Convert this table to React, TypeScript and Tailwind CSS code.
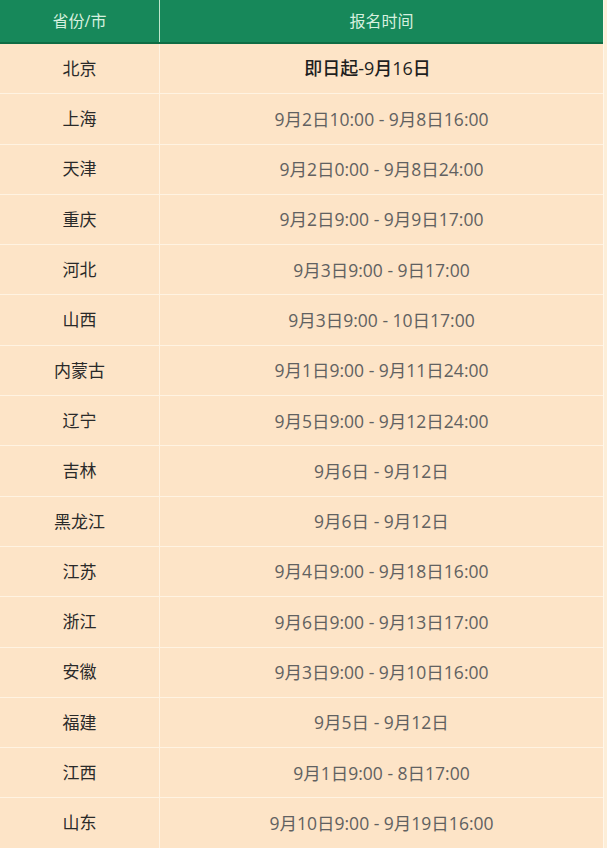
import React from "react";

const rows: [string, string, boolean?][] = [
  ["北京", "即日起-9月16日", true],
  ["上海", "9月2日10:00 - 9月8日16:00"],
  ["天津", "9月2日0:00 - 9月8日24:00"],
  ["重庆", "9月2日9:00 - 9月9日17:00"],
  ["河北", "9月3日9:00 - 9日17:00"],
  ["山西", "9月3日9:00 - 10日17:00"],
  ["内蒙古", "9月1日9:00 - 9月11日24:00"],
  ["辽宁", "9月5日9:00 - 9月12日24:00"],
  ["吉林", "9月6日 - 9月12日"],
  ["黑龙江", "9月6日 - 9月12日"],
  ["江苏", "9月4日9:00 - 9月18日16:00"],
  ["浙江", "9月6日9:00 - 9月13日17:00"],
  ["安徽", "9月3日9:00 - 9月10日16:00"],
  ["福建", "9月5日 - 9月12日"],
  ["江西", "9月1日9:00 - 8日17:00"],
  ["山东", "9月10日9:00 - 9月19日16:00"],
];

export default function App() {
  return (
    <div
      className="w-[607px] h-[848px] overflow-hidden bg-[#fdeed8]"
      style={{ fontFamily: '"Open Sans", "Noto Sans CJK SC", sans-serif' }}
    >
      <div className="w-[604px] border-r border-[#fff6ea]">
        <div className="grid grid-cols-[160px_1fr] h-[44px] bg-[#17885a] border-b-2 border-[#0f6c44] text-[#d6f0df] text-[16px]">
          <div className="flex items-center justify-center border-r border-[#bfe6cc]">省份/市</div>
          <div className="flex items-center justify-center">报名时间</div>
        </div>
        {rows.map(([p, t, b], i) => (
          <div
            key={i}
            className="grid grid-cols-[160px_1fr] h-[50.3px] bg-[#fde4c7] border-b border-[#fff3e2]"
          >
            <div className="flex items-center justify-center border-r border-[#fff3e2] text-[17px] text-[#2a2a2a]">
              {p}
            </div>
            <div
              className={
                b
                  ? "flex items-center justify-center pr-[28px] text-[18px] text-[#1f1f1f] font-medium"
                  : "flex items-center justify-center text-[17.5px] text-[#616161]"
              }
            >
              {t}
            </div>
          </div>
        ))}
      </div>
    </div>
  );
}
